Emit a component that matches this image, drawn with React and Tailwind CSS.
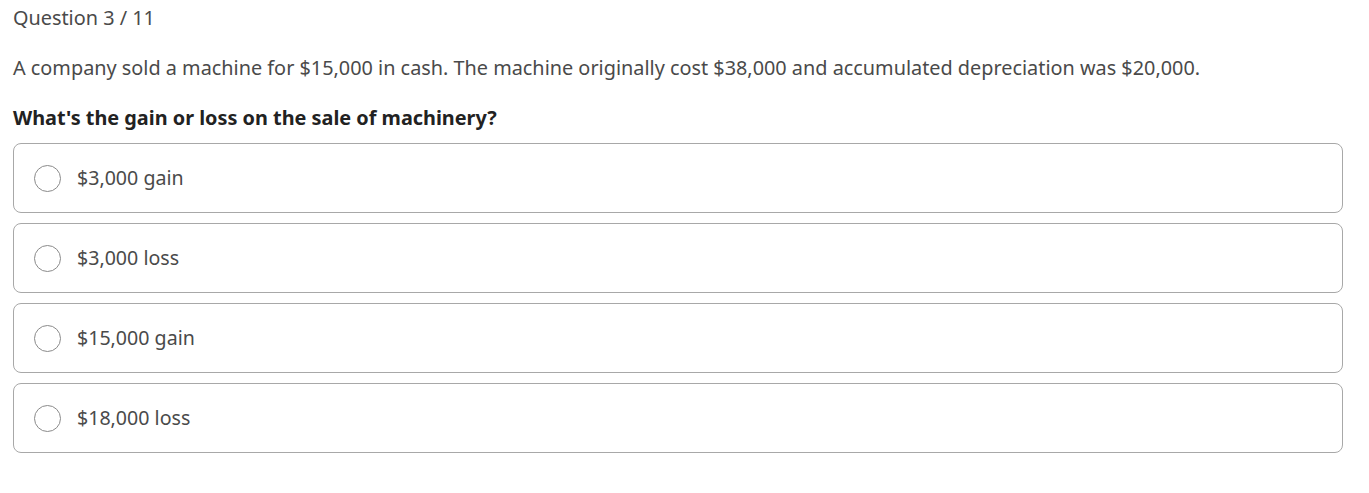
export default function App() {
  const options = ['$3,000 gain', '$3,000 loss', '$15,000 gain', '$18,000 loss']
  return (
    <main className="min-h-screen bg-white pl-[13px] pr-[26px] pt-[4px] text-[#4a4a4a] font-['Noto_Sans',sans-serif]">
      <div className="text-[19.85px] leading-[28px]">Question 3 / 11</div>
      <p className="mt-[22px] text-[19.85px] leading-[28px]">
        A company sold a machine for $15,000 in cash. The machine originally cost $38,000 and accumulated depreciation was $20,000.
      </p>
      <h2 className="mt-[22px] text-[19.85px] leading-[28px] font-bold text-[#222]">What's the gain or loss on the sale of machinery?</h2>
      <div className="mt-[11px] flex flex-col gap-[10px]">
        {options.map((o) => (
          <label key={o} className="flex h-[70px] items-center gap-[16px] rounded-lg border border-[#a8a8a8] px-[20px] cursor-pointer">
            <span className="h-[27px] w-[27px] rounded-full border border-[#8a8a8a] bg-white" />
            <span className="text-[19.6px]">{o}</span>
          </label>
        ))}
      </div>
    </main>
  )
}
